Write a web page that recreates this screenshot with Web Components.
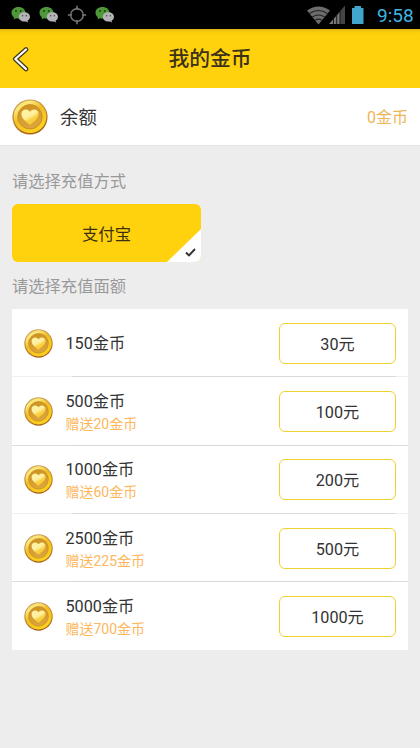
<!DOCTYPE html>
<html lang="zh-CN">
<head>
<meta charset="utf-8">
<title>我的金币</title>
<style>
html,body{margin:0;height:100%;background:#ededed;overflow:hidden}
body{font-family:Roboto,"Noto Sans CJK SC",sans-serif;color:#333}
</style>
</head>
<body>
<coin-app></coin-app>
<script>
const define = (name, html, init) => {
  const t = document.createElement('template');
  t.innerHTML = html;
  customElements.define(name, class extends HTMLElement {
    constructor() {
      super();
      this.attachShadow({ mode: 'open' }).append(t.content.cloneNode(true));
    }
    connectedCallback() { if (init) init(this, this.shadowRoot); }
  });
};

define('gold-coin', `
<style>:host{display:block;width:29px;height:29px;flex:none}svg{display:block;width:100%;height:100%}</style>
<svg viewBox="0 0 36 36">
  <defs>
    <linearGradient id="rim" x1="0" y1="0" x2=".3" y2="1"><stop offset="0" stop-color="#cfa565"/><stop offset=".6" stop-color="#bd8426"/><stop offset="1" stop-color="#a9661a"/></linearGradient>
    <linearGradient id="ring" x1="0" y1="0" x2=".6" y2="1"><stop offset="0" stop-color="#f3cf3c"/><stop offset=".25" stop-color="#fbe87e"/><stop offset=".5" stop-color="#f2bd28"/><stop offset="1" stop-color="#fbd21c"/></linearGradient>
    <linearGradient id="in" x1="0" y1="0" x2=".3" y2="1"><stop offset="0" stop-color="#cb901f"/><stop offset="1" stop-color="#dda43c"/></linearGradient>
    <linearGradient id="h" x1="0" y1="0" x2=".6" y2="1"><stop offset="0" stop-color="#fdf3a4"/><stop offset=".5" stop-color="#fff0a0"/><stop offset=".75" stop-color="#fbd64a"/><stop offset="1" stop-color="#f7c52e"/></linearGradient>
  </defs>
  <circle cx="18" cy="18" r="17.6" fill="url(#rim)"/>
  <circle cx="18" cy="17.8" r="16.300" fill="url(#ring)"/>
  <circle cx="18" cy="17.8" r="12.2" fill="url(#in)" stroke="#c58a20" stroke-width=".8"/>
  <path d="M18 25.800C14 22.800 9.400 19.300 9.400 15C9.400 10 15.200 9 18 12.700C20.800 9 26.600 10 26.600 15C26.600 19.300 22 22.800 18 25.800Z" fill="url(#h)"/>
  <path d="M18 25.800C22 22.800 26.600 19.300 26.600 15C26.600 14 26.400 13.100 26 12.500C24 17.500 18 20 12.800 21.700C14.300 23 16.500 24.700 18 25.800Z" fill="#f8cb35" opacity=".5"/>
</svg>`);

define('chat-icon', `
<style>:host{display:block;width:20px;height:18px}svg{display:block}</style>
<svg width="20" height="18" viewBox="0 0 20 18">
  <path d="M7.500 1C3.300 1 .5 3.500.5 6.800C.5 8.700 1.500 10.300 3 11.300L2.600 13.500L5 12.300C9.500 13.300 14.400 11 14.400 6.800C14.400 3.400 11.500 1 7.500 1Z" fill="#4f983a"/>
  <circle cx="5" cy="5" r=".9" fill="#173b10"/><circle cx="9.800" cy="5" r=".9" fill="#173b10"/>
  <path d="M13.400 6.300C10.300 6.300 7.800 8.300 7.800 11C7.800 14.200 11.300 16.200 15 15.400L17 16.500L16.600 14.600C18 13.800 19 12.500 19 11C19 8.300 16.500 6.300 13.400 6.300Z" fill="#b4b4b8"/>
  <circle cx="11.600" cy="9.800" r=".75" fill="#444"/><circle cx="15.300" cy="9.800" r=".75" fill="#444"/>
</svg>`);

define('status-bar', `
<style>
:host{display:flex;justify-content:space-between;height:29px;background:#000;box-sizing:border-box;padding:0 7px 0 11px;align-items:center}
.l,.r{display:flex;align-items:center}
.l{gap:8px}
svg{display:block;flex:none}
.time{font-size:19px;line-height:29px;padding-top:1px;color:#3fb5e3;margin-left:13px;width:36px;white-space:nowrap}
</style>
<div class="l"><chat-icon></chat-icon><chat-icon></chat-icon>
<svg width="20" height="20" viewBox="0 0 20 20" fill="none" stroke="#777" stroke-width="1.400"><circle cx="10" cy="10" r="6.300"/><path d="M10 .8V5M10 15V19.200M.8 10H5M15 10H19.200" stroke-width="1.600"/></svg>
<chat-icon></chat-icon></div>
<div class="r">
<svg width="58" height="22" viewBox="0 0 58 22">
  <path d="M1 6.500Q12.500-1.500 24 6.500L12.500 20.500Z" fill="#6c6c6c"/>
  <path d="M3.500 9.500Q12.500 3.500 21.500 9.500M6.300 13Q12.500 9 18.700 13M9 16.300Q12.500 14 16 16.300" fill="none" stroke="#222" stroke-width="1.100"/>
  <path d="M23 20H39V2Z" fill="#777"/><path d="M34 20V7.600L39 2V20Z" fill="#444"/>
  <path d="M27.500 14V20M30.700 10V20M34 7V20" stroke="#111" stroke-width=".9"/>
  <path d="M46 4H48.500V2H55V4H57.500V20H46Z" fill="#42a5cc"/>
</svg>
<span class="time">9:58</span></div>`);

define('nav-bar', `
<style>
:host{display:grid;grid-template-columns:44px 1fr 44px;align-items:center;height:59px;background:linear-gradient(#dfb411,#fbce0b 3px,#ffd20d 7px)}
svg{display:block;margin-left:11px}
h1{margin:0;padding-top:1px;text-align:center;font-size:20.800px;line-height:30px;font-weight:500;color:#3a3117}
</style>
<svg width="20" height="26" viewBox="0 0 20 26" fill="none" stroke-linecap="round" stroke-linejoin="round"><path d="M15 3.500L4.300 13L15 23" stroke="#3b3520" stroke-width="4.600"/><path d="M15 3.500L4.300 13L15 23" stroke="#fff" stroke-width="2.200"/></svg>
<h1><slot></slot></h1>`);

define('balance-row', `
<style>
:host{display:flex;align-items:center;height:58px;box-sizing:border-box;padding:0 12px;background:#fff;border-bottom:1px solid #e4e4e4}
gold-coin{width:36px;height:36px}
.n{font-size:18.400px;line-height:28px;padding-top:2px;margin-left:12px;flex:1}
.v{font-size:16px;line-height:24px;padding-top:2px;color:#efb555}
</style>
<gold-coin></gold-coin><span class="n"><slot></slot></span><span class="v"><slot name="value"></slot></span>`);

define('section-label', `
<style>:host{display:block;font-size:16.300px;line-height:24px;color:#999}</style><slot></slot>`);

define('pay-option', `
<style>
:host{display:grid;width:189px;height:58px;border-radius:6px;overflow:hidden;background:#ffd20d;font-size:16.300px;color:#3b3010}
span{grid-area:1/1;place-self:center;line-height:24px;padding-top:3px}
svg{grid-area:1/1;place-self:end;display:block}
</style>
<span><slot></slot></span>
<svg width="34" height="33" viewBox="0 0 34 33"><path d="M34 0V33H0Z" fill="#fff"/><path d="M19 23.500L22 26.500L28 20" fill="none" stroke="#333" stroke-width="1.900"/></svg>`);

define('amount-row', `
<style>
:host{display:grid;grid-template-rows:1fr 1px;height:68.300px;background:#fff}
.b{display:flex;align-items:center;padding:1px 12px 0 12px}
.t{flex:1;margin-left:12.500px;padding-top:3px;display:flex;flex-direction:column}
:host(:not([bonus])) .t{padding-top:0}
.n{font-size:16.200px;line-height:23px}
.s{font-size:14px;line-height:23px;color:#fdb75c}
.p{width:117px;height:41px;box-sizing:border-box;padding-top:1px;border:1px solid #efd02f;border-radius:6px;text-align:center;font-size:16.200px;line-height:40px}
.d{background:linear-gradient(90deg,var(--edge,#ddd) 60px,#d9d9d9 60px,#d9d9d9 384px,var(--edge,#ddd) 384px)}
:host([soft]){--edge:#f0f0f0}
:host([last]) .d{background:#fff}
</style>
<div class="b"><gold-coin></gold-coin><div class="t"><span class="n"><slot></slot></span><span class="s"></span></div><div class="p"></div></div><div class="d"></div>`,
(el, r) => {
  r.querySelector('.p').textContent = el.getAttribute('price');
  const s = r.querySelector('.s');
  if (el.hasAttribute('bonus')) s.textContent = el.getAttribute('bonus');
  else s.remove();
});

define('coin-app', `
<style>
:host{display:block;width:420px;height:748px;background:#ededed}
main{display:flex;flex-direction:column;padding:24px 12px 0}
pay-option{margin:10px 0 13px}
.list{margin-top:10px}
</style>
<status-bar></status-bar>
<nav-bar>我的金币</nav-bar>
<balance-row>余额<span slot="value">0金币</span></balance-row>
<main>
<section-label>请选择充值方式</section-label>
<pay-option>支付宝</pay-option>
<section-label>请选择充值面额</section-label>
<div class="list">
<amount-row price="30元" soft>150金币</amount-row>
<amount-row price="100元" bonus="赠送20金币">500金币</amount-row>
<amount-row price="200元" bonus="赠送60金币" soft>1000金币</amount-row>
<amount-row price="500元" bonus="赠送225金币">2500金币</amount-row>
<amount-row price="1000元" bonus="赠送700金币" last>5000金币</amount-row>
</div>
</main>`);
</script>
</body>
</html>
